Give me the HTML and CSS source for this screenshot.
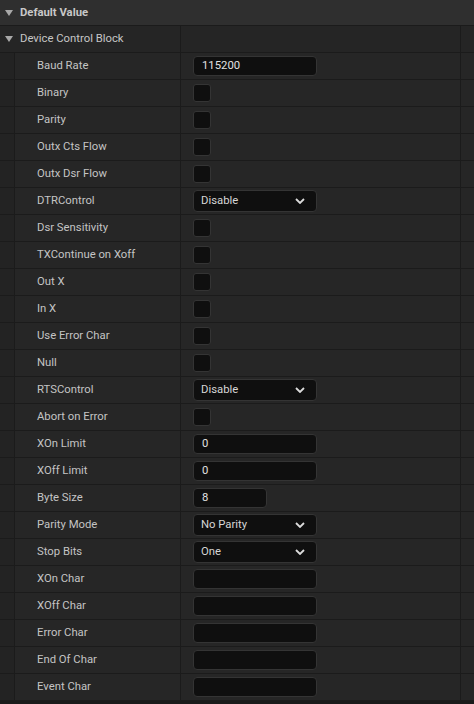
FILE: index.html
```html
<!DOCTYPE html>
<html>
<head>
<meta charset="utf-8">
<link rel="stylesheet" href="styles.css">
</head>
<body>
<div class="panel">
  <div class="cat-row">
    <span class="tri"></span><span class="cat-title">Default Value</span>
  </div>
  <div class="group-row">
    <div class="group-name"><span class="tri"></span><span>Device Control Block</span></div>
    <div class="group-value"></div>
    <div class="gutter"></div>
  </div>

  <div class="prop"><div class="indent"></div><div class="name">Baud Rate</div><div class="value"><div class="input">115200</div></div><div class="gutter"></div></div>
  <div class="prop"><div class="indent"></div><div class="name">Binary</div><div class="value"><div class="check"></div></div><div class="gutter"></div></div>
  <div class="prop"><div class="indent"></div><div class="name">Parity</div><div class="value"><div class="check"></div></div><div class="gutter"></div></div>
  <div class="prop"><div class="indent"></div><div class="name">Outx Cts Flow</div><div class="value"><div class="check"></div></div><div class="gutter"></div></div>
  <div class="prop"><div class="indent"></div><div class="name">Outx Dsr Flow</div><div class="value"><div class="check"></div></div><div class="gutter"></div></div>
  <div class="prop"><div class="indent"></div><div class="name">DTRControl</div><div class="value"><div class="combo"><span>Disable</span><svg class="chev" width="10" height="6" viewBox="0 0 10 6"><path d="M1 1 L5 5 L9 1" fill="none" stroke="#dcdcdc" stroke-width="1.8"/></svg></div></div><div class="gutter"></div></div>
  <div class="prop"><div class="indent"></div><div class="name">Dsr Sensitivity</div><div class="value"><div class="check"></div></div><div class="gutter"></div></div>
  <div class="prop"><div class="indent"></div><div class="name">TXContinue on Xoff</div><div class="value"><div class="check"></div></div><div class="gutter"></div></div>
  <div class="prop"><div class="indent"></div><div class="name">Out X</div><div class="value"><div class="check"></div></div><div class="gutter"></div></div>
  <div class="prop"><div class="indent"></div><div class="name">In X</div><div class="value"><div class="check"></div></div><div class="gutter"></div></div>
  <div class="prop"><div class="indent"></div><div class="name">Use Error Char</div><div class="value"><div class="check"></div></div><div class="gutter"></div></div>
  <div class="prop"><div class="indent"></div><div class="name">Null</div><div class="value"><div class="check"></div></div><div class="gutter"></div></div>
  <div class="prop"><div class="indent"></div><div class="name">RTSControl</div><div class="value"><div class="combo"><span>Disable</span><svg class="chev" width="10" height="6" viewBox="0 0 10 6"><path d="M1 1 L5 5 L9 1" fill="none" stroke="#dcdcdc" stroke-width="1.8"/></svg></div></div><div class="gutter"></div></div>
  <div class="prop"><div class="indent"></div><div class="name">Abort on Error</div><div class="value"><div class="check"></div></div><div class="gutter"></div></div>
  <div class="prop"><div class="indent"></div><div class="name">XOn Limit</div><div class="value"><div class="input">0</div></div><div class="gutter"></div></div>
  <div class="prop"><div class="indent"></div><div class="name">XOff Limit</div><div class="value"><div class="input">0</div></div><div class="gutter"></div></div>
  <div class="prop"><div class="indent"></div><div class="name">Byte Size</div><div class="value"><div class="input short">8</div></div><div class="gutter"></div></div>
  <div class="prop"><div class="indent"></div><div class="name">Parity Mode</div><div class="value"><div class="combo"><span>No Parity</span><svg class="chev" width="10" height="6" viewBox="0 0 10 6"><path d="M1 1 L5 5 L9 1" fill="none" stroke="#dcdcdc" stroke-width="1.8"/></svg></div></div><div class="gutter"></div></div>
  <div class="prop"><div class="indent"></div><div class="name">Stop Bits</div><div class="value"><div class="combo"><span>One</span><svg class="chev" width="10" height="6" viewBox="0 0 10 6"><path d="M1 1 L5 5 L9 1" fill="none" stroke="#dcdcdc" stroke-width="1.8"/></svg></div></div><div class="gutter"></div></div>
  <div class="prop"><div class="indent"></div><div class="name">XOn Char</div><div class="value"><div class="input"></div></div><div class="gutter"></div></div>
  <div class="prop"><div class="indent"></div><div class="name">XOff Char</div><div class="value"><div class="input"></div></div><div class="gutter"></div></div>
  <div class="prop"><div class="indent"></div><div class="name">Error Char</div><div class="value"><div class="input"></div></div><div class="gutter"></div></div>
  <div class="prop"><div class="indent"></div><div class="name">End Of Char</div><div class="value"><div class="input"></div></div><div class="gutter"></div></div>
  <div class="prop"><div class="indent"></div><div class="name">Event Char</div><div class="value"><div class="input"></div></div><div class="gutter"></div></div>
</div>
</body>
</html>
```
FILE: styles.css
```css
html, body {
  margin: 0;
  padding: 0;
  background: #1a1a1a;
}
body {
  width: 474px;
  height: 704px;
  overflow: hidden;
  font-family: Roboto, "Noto Sans", "Liberation Sans", sans-serif;
  font-size: 11.3px;
}
.panel {
  display: flex;
  flex-direction: column;
}
.tri {
  width: 0;
  height: 0;
  border-left: 4.5px solid transparent;
  border-right: 4.5px solid transparent;
  border-top: 6px solid #a8a8a8;
  margin: 0 7px 0 5px;
}
.cat-row {
  height: 25px;
  border-bottom: 1px solid #1b1b1b;
  background: #2f2f2f;
  display: flex;
  align-items: center;
}
.cat-title {
  font-weight: bold;
  color: #c8c8c8;
  padding-bottom: 1px;
}
.group-row {
  height: 26px;
  border-bottom: 1px solid #1b1b1b;
  background: #252525;
  display: flex;
}
.group-name {
  width: 180px;
  border-right: 1px solid #1b1b1b;
  display: flex;
  align-items: center;
  color: #c6c6c6;
}
.group-name span:last-child {
  padding-bottom: 1px;
}
.group-value {
  flex: 1;
  border-right: 1px solid #1b1b1b;
}
.gutter {
  width: 13px;
  background: #262626;
}
.group-row .gutter {
  background: #252525;
}
.prop {
  height: 26px;
  border-bottom: 1px solid #1b1b1b;
  background: #262626;
  display: flex;
}
.indent {
  width: 14px;
  background: #232323;
  border-right: 1px solid #1b1b1b;
}
.name {
  box-sizing: border-box;
  width: 166px;
  padding-left: 22px;
  padding-bottom: 1px;
  border-right: 1px solid #1b1b1b;
  display: flex;
  align-items: center;
  color: #c4c4c4;
}
.value {
  flex: 1;
  border-right: 1px solid #1b1b1b;
  padding-left: 12px;
  display: flex;
  align-items: center;
}
.input {
  width: 106px;
  height: 17px;
  padding: 0 8px 1px;
  background: #0f0f0f;
  border: 1px solid #343434;
  border-radius: 4px;
  color: #e2e2e2;
  display: flex;
  align-items: center;
}
.input.short {
  width: 56px;
}
.check {
  width: 16px;
  height: 16px;
  background: #0f0f0f;
  border: 1px solid #343434;
  border-radius: 3px;
}
.combo {
  width: 104px;
  height: 20px;
  padding: 0 11px 0 7px;
  background: #0f0f0f;
  border: 1px solid #343434;
  border-radius: 4px;
  color: #d6d6d6;
  display: flex;
  align-items: center;
  justify-content: space-between;
}
.combo span {
  padding-bottom: 1px;
}
```
